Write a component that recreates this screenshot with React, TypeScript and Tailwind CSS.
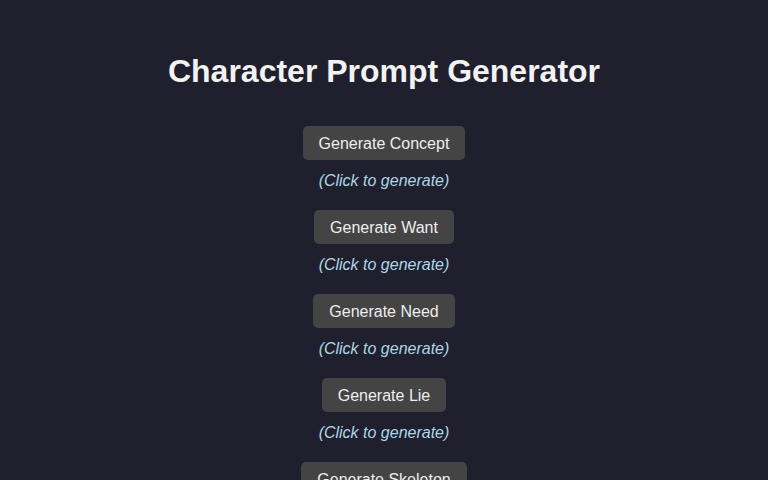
export default function App() {
  const items = ["Concept", "Want", "Need", "Lie", "Skeleton"];
  return (
    <div
      className="w-full bg-[#1f1f2e] flex flex-col items-center pt-[53px] overflow-hidden h-[480px]"
      style={{ fontFamily: '"Liberation Sans", Arial, sans-serif' }}
    >
      <h1 className="text-[32px] leading-[37px] font-bold text-[#f2f2f2] m-0">Character Prompt Generator</h1>
      <div className="flex flex-col items-center mt-[36px]">
        {items.map((it) => (
          <div key={it} className="flex flex-col items-center mb-[17px]">
            <button className="bg-[#444444] text-[#eeeeee] text-base leading-5 pt-[8px] pb-[6px] px-4 rounded-[5px]">
              Generate {it}
            </button>
            <p className="mt-[9px] italic text-base leading-6 text-[#add8e6]">(Click to generate)</p>
          </div>
        ))}
      </div>
    </div>
  );
}
